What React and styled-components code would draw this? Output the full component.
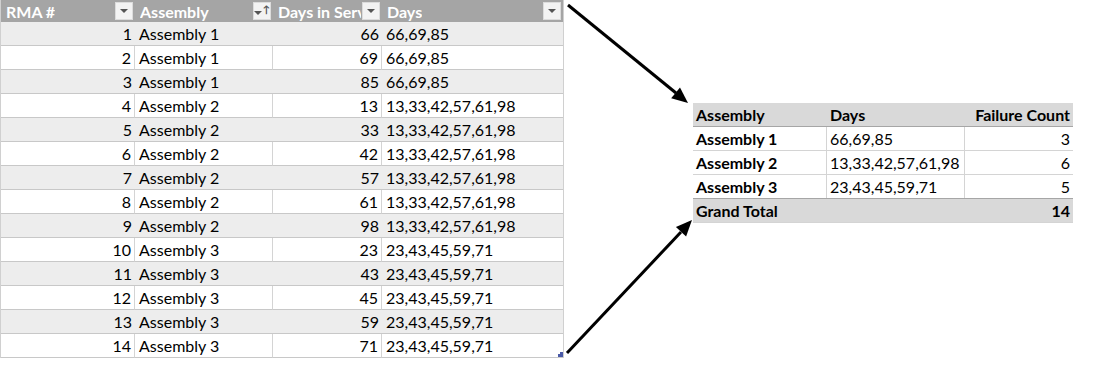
import React from 'react';
import styled, { createGlobalStyle } from 'styled-components';

const GlobalStyle = createGlobalStyle`
  body {
    margin: 0;
    background: #fff;
    font-family: Lato, "Liberation Sans", sans-serif;
    color: #000;
  }
`;

const Page = styled.div`
  position: relative;
  width: 1096px;
  height: 376px;
  display: flex;
  align-items: flex-start;
  overflow: hidden;
`;

const Sheet = styled.div`
  display: grid;
  grid-template-columns: 134px 138px 109px 181px;
  width: 562px;
  border-left: 1px solid #d0d0d0;
  border-right: 1px solid #d0d0d0;
  font-size: 16px;
`;

const HeadCell = styled.div`
  position: relative;
  height: 22px;
  background: #a5a5a5;
  color: #fff;
  font-weight: 700;
  display: flex;
  align-items: center;
  padding: 0 21px 0 5px;
  white-space: nowrap;
  overflow: hidden;
`;

const HeadLabel = styled.span`
  overflow: hidden;
  min-width: 0;
`;

const FilterButton = styled.span`
  position: absolute;
  right: 2px;
  top: 2px;
  width: 18px;
  height: 18px;
  box-sizing: border-box;
  background: #f3f3f3;
  border: 1px solid #dcdcdc;
  display: flex;
  align-items: center;
  justify-content: center;
  gap: 1px;
`;

const Caret = styled.span`
  width: 0;
  height: 0;
  border-left: 4px solid transparent;
  border-right: 4px solid transparent;
  border-top: 4px solid #555;
  margin-top: ${p => (p.$sort ? '4px' : '0')};
`;

const SortMark = styled.span`
  font-size: 10px;
  color: #555;
  line-height: 1;
  margin-top: -4px;
`;

const Cell = styled.div`
  position: relative;
  height: 23px;
  border-bottom: 1px solid #c8c8c8;
  border-right: ${p => (p.$band || p.$last ? 'none' : '1px solid #d4d4d4')};
  background: ${p => (p.$band ? '#ededed' : '#fff')};
  display: flex;
  align-items: center;
  justify-content: ${p => (p.$num ? 'flex-end' : 'flex-start')};
  padding: 0 3px 0 4px;
  white-space: nowrap;
`;

const ResizeHandle = styled.span`
  position: absolute;
  right: 0;
  bottom: 0;
  width: 5px;
  height: 5px;
  background: #4a5aa8;
  clip-path: polygon(100% 0, 100% 100%, 0 100%, 0 40%, 40% 40%, 40% 0);
`;

const Pivot = styled.div`
  display: grid;
  grid-template-columns: 134px 138px 108px;
  margin: 103px 0 0 129px;
  font-size: 16px;
`;

const PivotCell = styled.div`
  height: 23px;
  background: ${p => (p.$head || p.$total ? '#d9d9d9' : '#fff')};
  font-weight: ${p => (p.$bold ? 700 : 400)};
  border-bottom: 1px solid ${p => (p.$head ? '#a6a6a6' : '#d4d4d4')};
  border-top: ${p => (p.$total ? '1px solid #a6a6a6' : 'none')};
  margin-top: ${p => (p.$total ? '-1px' : '0')};
  border-right: ${p => (p.$head || p.$total || p.$last ? 'none' : '1px solid #d4d4d4')};
  display: flex;
  align-items: center;
  justify-content: ${p => (p.$num ? 'flex-end' : 'flex-start')};
  padding: 0 3px 0 3px;
  white-space: nowrap;
`;

const Arrows = styled.svg`
  position: absolute;
  left: 0;
  top: 0;
  pointer-events: none;
`;

const days = {
  'Assembly 1': '66,69,85',
  'Assembly 2': '13,33,42,57,61,98',
  'Assembly 3': '23,43,45,59,71',
};

const rows = [
  [1, 1, 66], [2, 1, 69], [3, 1, 85],
  [4, 2, 13], [5, 2, 33], [6, 2, 42], [7, 2, 57], [8, 2, 61], [9, 2, 98],
  [10, 3, 23], [11, 3, 43], [12, 3, 45], [13, 3, 59], [14, 3, 71],
];

const pivotRows = [
  ['Assembly 1', 3],
  ['Assembly 2', 6],
  ['Assembly 3', 5],
];

const headers = [
  { label: 'RMA #' },
  { label: 'Assembly', sorted: true },
  { label: 'Days in Service' },
  { label: 'Days' },
];

function App() {
  return (
    <>
      <GlobalStyle />
      <Page>
        <Sheet>
          {headers.map(h => (
            <HeadCell key={h.label}>
              <HeadLabel>{h.label}</HeadLabel>
              <FilterButton>
                <Caret $sort={h.sorted} />
                {h.sorted && <SortMark>↑</SortMark>}
              </FilterButton>
            </HeadCell>
          ))}
          {rows.map(([id, a, d], i) => {
            const band = i % 2 === 0;
            const name = `Assembly ${a}`;
            return (
              <React.Fragment key={id}>
                <Cell $band={band} $num>{id}</Cell>
                <Cell $band={band}>{name}</Cell>
                <Cell $band={band} $num>{d}</Cell>
                <Cell $band={band} $last>
                  {days[name]}
                  {i === rows.length - 1 && <ResizeHandle />}
                </Cell>
              </React.Fragment>
            );
          })}
        </Sheet>

        <Pivot>
          <PivotCell $head $bold>Assembly</PivotCell>
          <PivotCell $head $bold>Days</PivotCell>
          <PivotCell $head $bold $num>Failure Count</PivotCell>
          {pivotRows.map(([name, n]) => (
            <React.Fragment key={name}>
              <PivotCell $bold>{name}</PivotCell>
              <PivotCell>{days[name]}</PivotCell>
              <PivotCell $num $last>{n}</PivotCell>
            </React.Fragment>
          ))}
          <PivotCell $total $bold>Grand Total</PivotCell>
          <PivotCell $total />
          <PivotCell $total $bold $num>14</PivotCell>
        </Pivot>

        <Arrows width="1096" height="376" viewBox="0 0 1096 376">
          <line x1="568" y1="5" x2="676" y2="93" stroke="#000" strokeWidth="3" />
          <polygon points="688,103 671.2,98.3 680,87.5" fill="#000" />
          <line x1="567" y1="353" x2="681" y2="232" stroke="#000" strokeWidth="3" />
          <polygon points="692,220 686.1,236.5 675.9,226.9" fill="#000" />
        </Arrows>
      </Page>
    </>
  );
}

export default App;
